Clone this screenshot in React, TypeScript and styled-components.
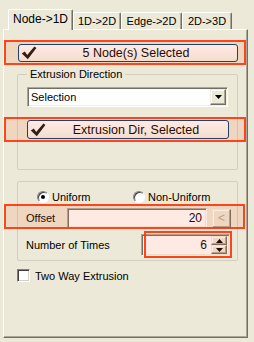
import React from "react";
import styled, { createGlobalStyle } from "styled-components";

const GlobalStyle = createGlobalStyle`
  html, body {
    margin: 0;
    padding: 0;
    background: #ece9d8;
  }
  body {
    font-family: "Liberation Sans", Arial, sans-serif;
    font-size: 11px;
    color: #000;
  }
`;

const Window = styled.div`
  width: 254px;
  height: 342px;
  padding-top: 9px;
  box-sizing: border-box;
  background: #ece9d8;
  overflow: hidden;
`;

const TabStrip = styled.div`
  display: flex;
  align-items: flex-end;
  height: 20px;
  padding-left: 8px;
  position: relative;
  z-index: 1;
`;

const Tab = styled.div<{ $active?: boolean; $w: number }>`
  width: ${(p) => p.$w}px;
  height: ${(p) => (p.$active ? 21 : 17)}px;
  margin-bottom: ${(p) => (p.$active ? -1 : 0)}px;
  box-sizing: border-box;
  border: 1px solid;
  border-color: #fff #716f64 transparent #fff;
  border-bottom: none;
  border-radius: 2px 2px 0 0;
  box-shadow: inset -1px 0 0 #aca899;
  background: #ece9d8;
  display: flex;
  align-items: center;
  justify-content: center;
  padding-bottom: ${(p) => (p.$active ? 2 : 0)}px;
  font-size: ${(p) => (p.$active ? 12 : 11)}px;
`;

const Panel = styled.div`
  margin-left: 3px;
  width: 245px;
  height: 309px;
  box-sizing: border-box;
  border: 1px solid;
  border-color: #fff #716f64 #716f64 #fff;
  box-shadow: inset -1px -1px 0 #aca899;
  display: flex;
  flex-direction: column;
`;

// red review marker drawn over the control
const Mark = styled.div<{ $inset?: string }>`
  position: relative;
  &::after {
    content: "";
    position: absolute;
    inset: ${(p) => p.$inset ?? "0"};
    border: 2px solid rgba(255, 52, 10, 0.9);
    background: rgba(255, 90, 40, 0.13);
    pointer-events: none;
  }
`;

const ButtonMark = styled(Mark)<{ $pad: string; $margin: string }>`
  padding: ${(p) => p.$pad};
  margin: ${(p) => p.$margin};
  display: flex;
`;

const PushButton = styled.div<{ $h: number }>`
  flex: 1;
  height: ${(p) => p.$h}px;
  box-sizing: border-box;
  border: 1px solid #003c74;
  border-radius: 3px;
  background: linear-gradient(#ffffff, #f3f1e8);
  display: flex;
  align-items: center;
  padding-left: 2px;
  font-size: 12.5px;
`;

const ButtonLabel = styled.span`
  flex: 1;
  text-align: center;
  padding-right: 2px;
`;

const GroupBox = styled.div<{ $h: number; $mt: number }>`
  position: relative;
  margin: ${(p) => p.$mt}px 9px 0 13px;
  height: ${(p) => p.$h}px;
  box-sizing: border-box;
  border: 1px solid #d0d0bf;
  border-radius: 2px;
  display: flex;
  flex-direction: column;
`;

const Caption = styled.span`
  position: absolute;
  top: -7px;
  left: 9px;
  padding: 0 3px;
  background: #ece9d8;
  line-height: 13px;
`;

const Combo = styled.div`
  margin: 12px 0 0 9px;
  width: 201px;
  height: 20px;
  box-sizing: border-box;
  background: #fff;
  border: 1px solid;
  border-color: #aca899 #fff #fff #aca899;
  box-shadow: inset 1px 1px 0 #716f64, inset -1px -1px 0 #f1efe2;
  display: flex;
  align-items: center;
  padding: 0 1px 0 3px;
`;

const ComboText = styled.span`
  flex: 1;
`;

const RaisedBtn = styled.div<{ $w: number; $h: number }>`
  width: ${(p) => p.$w}px;
  height: ${(p) => p.$h}px;
  flex: none;
  box-sizing: border-box;
  background: #ece9d8;
  border: 1px solid;
  border-color: #f1efe2 #716f64 #716f64 #f1efe2;
  box-shadow: inset -1px -1px 0 #aca899, inset 1px 1px 0 #fff;
  display: flex;
  align-items: center;
  justify-content: center;
`;

const RadioRow = styled.div`
  display: flex;
  align-items: center;
  height: 14px;
  margin-top: 8px;
  padding-left: 19px;
`;

const RadioItem = styled.label<{ $w?: number }>`
  display: flex;
  align-items: center;
  gap: 3px;
  width: ${(p) => (p.$w ? `${p.$w}px` : "auto")};
`;

const RadioDot = styled.span<{ $on?: boolean }>`
  width: 12px;
  height: 12px;
  box-sizing: border-box;
  border-radius: 50%;
  border: 1px solid;
  border-color: #808080 #fff #fff #808080;
  box-shadow: inset 1px 1px 0 #404040;
  background: #fff;
  display: flex;
  align-items: center;
  justify-content: center;
  &::after {
    content: "";
    width: 4px;
    height: 4px;
    border-radius: 50%;
    background: ${(p) => (p.$on ? "#000" : "transparent")};
  }
`;

const Field = styled.div<{ $w: number; $h: number; $pr: number }>`
  width: ${(p) => p.$w}px;
  height: ${(p) => p.$h}px;
  flex: none;
  box-sizing: border-box;
  background: #fff;
  border: 1px solid;
  border-color: #aca899 #fff #fff #aca899;
  box-shadow: inset 1px 1px 0 #716f64, inset -1px -1px 0 #f1efe2;
  display: flex;
  align-items: center;
  justify-content: flex-end;
  padding-right: ${(p) => p.$pr}px;
  font-size: 12px;
`;

const OffsetMark = styled(Mark)`
  display: flex;
  align-items: center;
  margin: 0 -8px 0 -14px;
  padding: 4px 14px 1px 22px;
`;

const FieldLabel = styled.span<{ $w: number }>`
  width: ${(p) => p.$w}px;
  flex: none;
`;

const LessBtn = styled(RaisedBtn)`
  margin-left: 5px;
  color: #b8a89e;
  font-size: 12px;
`;

const SpinRow = styled.div`
  display: flex;
  align-items: center;
  margin-top: 5px;
  padding-left: 8px;
`;

const SpinBox = styled(Mark)`
  display: flex;
  flex: none;
`;

const SpinButtons = styled.div`
  display: flex;
  flex-direction: column;
  margin-left: 4px;
`;

const CheckRow = styled.label`
  display: flex;
  align-items: center;
  gap: 5px;
  margin: 8px 0 0 13px;
`;

const CheckBox = styled.span`
  width: 13px;
  height: 13px;
  box-sizing: border-box;
  border: 1px solid;
  border-color: #808080 #fff #fff #808080;
  box-shadow: inset 1px 1px 0 #404040, inset -1px -1px 0 #d4d0c8;
  background: #fff;
`;

const Tick = () => (
  <svg width="16" height="14" viewBox="0 0 16 14">
    <path d="M0.8 7.6 L3.8 5.6 L6.2 9 L13.4 0.6 L15.4 2 L6.8 13.2 Z" fill="#151515" />
  </svg>
);

const Arrow = ({ up }: { up?: boolean }) => (
  <svg width="7" height="4" viewBox="0 0 7 4">
    <path d={up ? "M3.5 0 L7 4 L0 4 Z" : "M0 0 L7 0 L3.5 4 Z"} fill="#000" />
  </svg>
);

export default function App() {
  return (
    <Window>
      <GlobalStyle />
      <TabStrip>
        <Tab $active $w={65}>Node-&gt;1D</Tab>
        <Tab $w={48}>1D-&gt;2D</Tab>
        <Tab $w={61}>Edge-&gt;2D</Tab>
        <Tab $w={50}>2D-&gt;3D</Tab>
      </TabStrip>
      <Panel>
        <ButtonMark $pad="4px 8px 3px 14px" $margin="10px 1px 0 0">
          <PushButton $h={18}>
            <Tick />
            <ButtonLabel>5 Node(s) Selected</ButtonLabel>
          </PushButton>
        </ButtonMark>

        <GroupBox $h={96} $mt={9}>
          <Caption>Extrusion Direction</Caption>
          <Combo>
            <ComboText>Selection</ComboText>
            <RaisedBtn $w={16} $h={16}>
              <Arrow />
            </RaisedBtn>
          </Combo>
          <ButtonMark $pad="3px 17px 3px 23px" $margin="10px -9px 0 -14px">
            <PushButton $h={19}>
              <Tick />
              <ButtonLabel>Extrusion Dir, Selected</ButtonLabel>
            </PushButton>
          </ButtonMark>
        </GroupBox>

        <GroupBox $h={80} $mt={11}>
          <RadioRow>
            <RadioItem $w={96}>
              <RadioDot $on />
              Uniform
            </RadioItem>
            <RadioItem>
              <RadioDot />
              Non-Uniform
            </RadioItem>
          </RadioRow>
          <OffsetMark>
            <FieldLabel $w={41}>Offset</FieldLabel>
            <Field $w={140} $h={20} $pr={4}>20</Field>
            <LessBtn $w={19} $h={19}>&lt;</LessBtn>
          </OffsetMark>
          <SpinRow>
            <FieldLabel $w={115}>Number of Times</FieldLabel>
            <SpinBox $inset="-3px -2px -2px 3px">
              <Field $w={89} $h={22} $pr={2}>
                6
                <SpinButtons>
                  <RaisedBtn $w={16} $h={9}>
                    <Arrow up />
                  </RaisedBtn>
                  <RaisedBtn $w={16} $h={9}>
                    <Arrow />
                  </RaisedBtn>
                </SpinButtons>
              </Field>
            </SpinBox>
          </SpinRow>
        </GroupBox>

        <CheckRow>
          <CheckBox />
          Two Way Extrusion
        </CheckRow>
      </Panel>
    </Window>
  );
}
